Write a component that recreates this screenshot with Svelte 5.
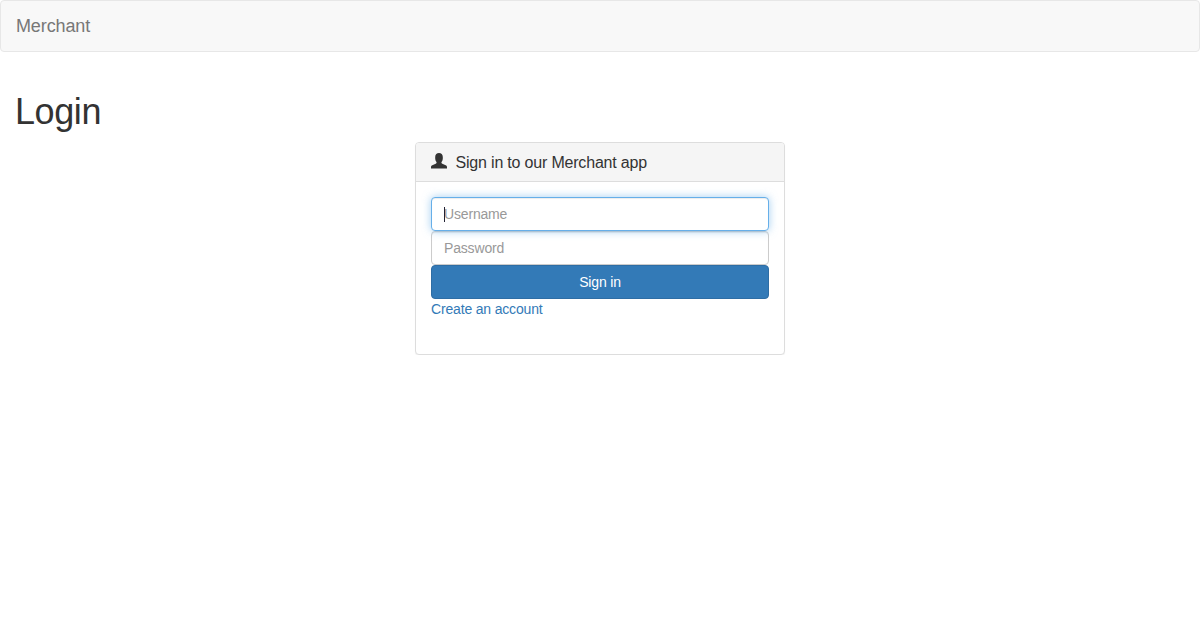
<script>
	let username = $state('');
	let password = $state('');
</script>

<nav class="navbar">
	<a class="brand" href="#top">Merchant</a>
</nav>

<main class="page">
	<h1>Login</h1>
	<section class="panel">
		<div class="panel-heading">
			<h3>
				<svg class="user-icon" viewBox="0 0 16 16" aria-hidden="true">
					<path d="M0 15.500v-1.400c0-.9.5-1.500 1.300-1.900l3.400-1.500c.5-.3.9-.6.9-1.100 0-.4-.2-.7-.5-1.100-.5-.7-.9-1.700-.9-2.900V3.900C4.200 1.500 5.800 0 8 0s3.800 1.500 3.800 3.900v1.700c0 1.200-.4 2.200-.9 2.900-.3.400-.5.700-.5 1.100 0 .5.400.8.900 1.100l3.400 1.500c.8.400 1.300 1 1.300 1.900v1.400z" />
				</svg>
				<span class="title">Sign in to our Merchant app</span>
			</h3>
		</div>
		<div class="panel-body">
			<form>
				<div class="field">
					<!-- svelte-ignore a11y_autofocus -->
					<input type="text" placeholder="Username" autofocus bind:value={username} />
					{#if !username}
						<span class="caret"></span>
					{/if}
				</div>
				<input type="password" placeholder="Password" bind:value={password} />
				<button type="button">Sign in</button>
				<a class="signup" href="#top">Create an account</a>
			</form>
		</div>
	</section>
</main>

<style>
	:global(body) {
		margin: 0;
		background: #fff;
		color: #333;
		font-family: "Helvetica Neue", Helvetica, "Liberation Sans", Arial, sans-serif;
		font-size: 14px;
		line-height: 20px;
		letter-spacing: -0.17px;
	}

	* {
		box-sizing: border-box;
	}

	.navbar {
		min-height: 52px;
		margin-bottom: 20px;
		background: #f8f8f8;
		border: 1px solid #e7e7e7;
		border-radius: 4px;
	}

	.brand {
		display: block;
		width: fit-content;
		height: 50px;
		padding: 15px;
		color: #777;
		font-size: 18px;
		letter-spacing: -0.12px;
		text-decoration: none;
	}

	.page {
		padding: 0 15px;
		/* keeps the h1 margin from collapsing into the navbar's */
		display: flow-root;
	}

	h1 {
		margin: 20px 0 10px;
		font-size: 36px;
		font-weight: 500;
		line-height: 1.1;
		letter-spacing: -0.4px;
	}

	.panel {
		width: 370px;
		margin: 0 auto;
		background: #fff;
		border: 1px solid #ddd;
		border-radius: 4px;
		box-shadow: 0 1px 1px rgba(0, 0, 0, 0.05);
	}

	.panel-heading {
		padding: 10px 15px;
		background: #f5f5f5;
		border-bottom: 1px solid #ddd;
		border-radius: 3px 3px 0 0;
	}

	h3 {
		display: flex;
		align-items: flex-start;
		gap: 8.5px;
		height: 18px;
		margin: 0;
		font-size: 16px;
		font-weight: 500;
		line-height: 18px;
		letter-spacing: -0.19px;
	}

	.title {
		padding-top: 1px;
	}

	.user-icon {
		width: 16px;
		height: 16px;
		fill: #333;
	}

	.panel-body {
		padding: 15px;
	}

	form {
		margin-bottom: 20px;
	}

	.field {
		position: relative;
	}

	.caret {
		position: absolute;
		z-index: 3;
		top: 10px;
		left: 13px;
		width: 1px;
		height: 15px;
		background: #223;
		pointer-events: none;
	}

	input {
		display: block;
		width: 100%;
		height: 34px;
		padding: 6px 12px;
		color: #555;
		background: #fff;
		border: 1px solid #ccc;
		border-radius: 4px;
		box-shadow: inset 0 1px 1px rgba(0, 0, 0, 0.075);
		font: inherit;
		letter-spacing: inherit;
	}

	input::placeholder {
		color: #999;
		opacity: 1;
	}

	input:focus {
		position: relative;
		z-index: 2;
		border-color: #66afe9;
		outline: 0;
		box-shadow: inset 0 1px 1px rgba(0, 0, 0, 0.075), 0 0 8px rgba(102, 175, 233, 0.6);
	}

	button {
		display: block;
		width: 100%;
		height: 34px;
		padding: 6px 12px;
		color: #fff;
		background: #337ab7;
		border: 1px solid #2e6da4;
		border-radius: 4px;
		font: inherit;
		letter-spacing: inherit;
	}

	.signup {
		display: block;
		width: fit-content;
		color: #337ab7;
		text-decoration: none;
	}
</style>
